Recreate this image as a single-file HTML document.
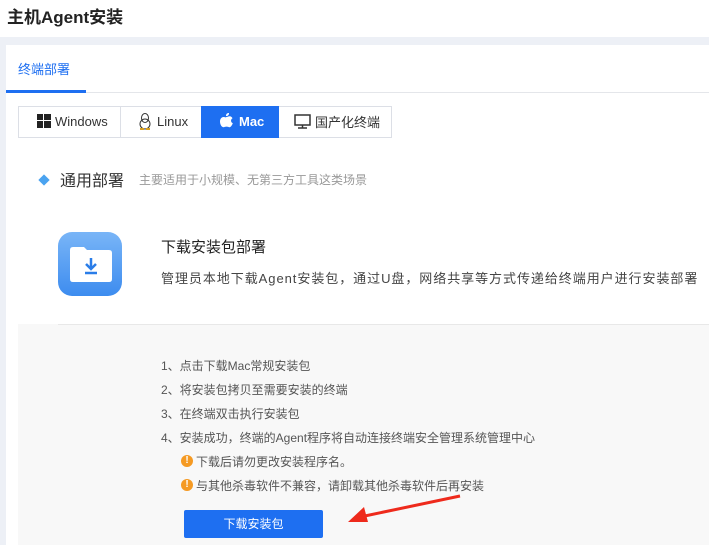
<!DOCTYPE html>
<html><head><meta charset="utf-8"><style>
*{margin:0;padding:0;box-sizing:border-box}
body{width:709px;height:545px;overflow:hidden;background:#edf0f6;font-family:"Liberation Sans","Noto Sans CJK SC",sans-serif;position:relative;color:#333}
.a{position:absolute;white-space:nowrap}
</style></head><body>
<div class="a" style="left:0;top:0;width:709px;height:37px;background:#fff"></div>
<div class="a" style="left:7px;top:3px;font-size:17px;font-weight:bold;color:#222">主机Agent安装</div>
<div class="a" style="left:6px;top:45px;width:703px;height:500px;background:#fff"></div>
<div class="a" style="left:18px;top:59px;font-size:13px;color:#1e6ff1">终端部署</div>
<div class="a" style="left:6px;top:92px;width:703px;height:1px;background:#e4e6ea"></div>
<div class="a" style="left:6px;top:90px;width:80px;height:3px;background:#1e6ff1"></div>
<div class="a" style="left:18px;top:106px;width:374px;height:32px;border:1px solid #dcdfe6;background:#fff"></div>
<div class="a" style="left:120px;top:106px;width:1px;height:32px;background:#dcdfe6"></div>
<div class="a" style="left:201px;top:106px;width:78px;height:32px;background:#1e6ff1"></div>
<svg class="a" style="left:37px;top:114px" width="14" height="14"><rect x="0" y="0" width="6" height="6" fill="#222"/><rect x="7" y="0" width="7" height="6" fill="#222"/><rect x="0" y="7" width="6" height="7" fill="#222"/><rect x="7" y="7" width="7" height="7" fill="#222"/></svg>
<div class="a" style="left:55px;top:114px;font-size:13px;color:#333">Windows</div>
<svg class="a" style="left:138px;top:113px" width="14" height="17"><ellipse cx="7" cy="5" rx="3.5" ry="4.5" fill="none" stroke="#333"/><ellipse cx="7" cy="11" rx="5" ry="5" fill="none" stroke="#333"/><path d="M2 16h4M8 16h4" stroke="#d9a020" stroke-width="2"/></svg>
<div class="a" style="left:157px;top:114px;font-size:13px;color:#333">Linux</div>
<svg class="a" style="left:220px;top:113px" width="13" height="15"><path d="M9 0c0 2-1 3-3 3 0-2 1-3 3-3zM6.5 4c1 0 2-.8 3-.8 1.5 0 2.5 1 3 2-2 1-2 4 .3 5-.8 2-2 4-3.3 4-1 0-1.3-.6-3-.6s-2 .6-3 .6C1 14 0 10.5 0 8.5 0 5.5 2 4 3.5 4c1.2 0 2 .8 3 0z" fill="#fff"/></svg>
<div class="a" style="left:239px;top:114px;font-size:13px;font-weight:bold;color:#fff">Mac</div>
<svg class="a" style="left:294px;top:114px" width="17" height="15"><rect x="1" y="1" width="15" height="10" fill="none" stroke="#333" stroke-width="1.5"/><path d="M8.5 11v3M4 14h9" stroke="#333" stroke-width="1.5"/></svg>
<div class="a" style="left:315px;top:112px;font-size:13px;color:#333">国产化终端</div>
<div class="a" style="left:40px;top:176px;width:8px;height:8px;background:#4aa3f0;transform:rotate(45deg)"></div>
<div class="a" style="left:60px;top:167px;font-size:16px;color:#333">通用部署</div>
<div class="a" style="left:139px;top:171px;font-size:12px;color:#999">主要适用于小规模、无第三方工具这类场景</div>
<div class="a" style="left:58px;top:232px;width:64px;height:64px;border-radius:14px;background:linear-gradient(#79b5f7,#3d8cef)"></div>
<svg class="a" style="left:70px;top:246px" width="42" height="36"><path d="M0 4q0-3 3-3h11l3 3h22q3 0 3 3v26q0 3-3 3H3q-3 0-3-3z" fill="#fff"/><path d="M21 12v10M16 18l5 5 5-5M15 27h12" stroke="#2a7de8" stroke-width="2.5" fill="none"/></svg>
<div class="a" style="left:161px;top:236px;font-size:15px;color:#222">下载安装包部署</div>
<div class="a" style="left:161px;top:268px;font-size:13px;color:#444;letter-spacing:0.95px">管理员本地下载Agent安装包，通过U盘，网络共享等方式传递给终端用户进行安装部署</div>
<div class="a" style="left:18px;top:324px;width:691px;height:221px;background:#f8f8f8"></div>
<div class="a" style="left:58px;top:324px;width:651px;height:1px;background:#e8e8e8"></div>
<div class="a" style="left:161px;top:354px;font-size:12px;color:#555;line-height:24px">1、点击下载Mac常规安装包<br>2、将安装包拷贝至需要安装的终端<br>3、在终端双击执行安装包<br>4、安装成功，终端的Agent程序将自动连接终端安全管理系统管理中心</div>
<div class="a" style="left:181px;top:455px;width:12px;height:12px;border-radius:50%;background:#f59a23;color:#fff;font-size:10px;font-weight:bold;text-align:center;line-height:12px">!</div>
<div class="a" style="left:196px;top:453px;font-size:12px;color:#555">下载后请勿更改安装程序名。</div>
<div class="a" style="left:181px;top:479px;width:12px;height:12px;border-radius:50%;background:#f59a23;color:#fff;font-size:10px;font-weight:bold;text-align:center;line-height:12px">!</div>
<div class="a" style="left:196px;top:477px;font-size:12px;color:#555">与其他杀毒软件不兼容，请卸载其他杀毒软件后再安装</div>
<div class="a" style="left:184px;top:510px;width:139px;height:28px;background:#1e6ff1;border-radius:2px;color:#fff;font-size:12px;text-align:center;line-height:28px">下载安装包</div>
<svg class="a" style="left:340px;top:490px" width="125" height="40"><path d="M120 6L20 27" stroke="#ee2a1c" stroke-width="3"/><path d="M8 32L24 17L28 32z" fill="#ee2a1c"/></svg>
</body></html>
